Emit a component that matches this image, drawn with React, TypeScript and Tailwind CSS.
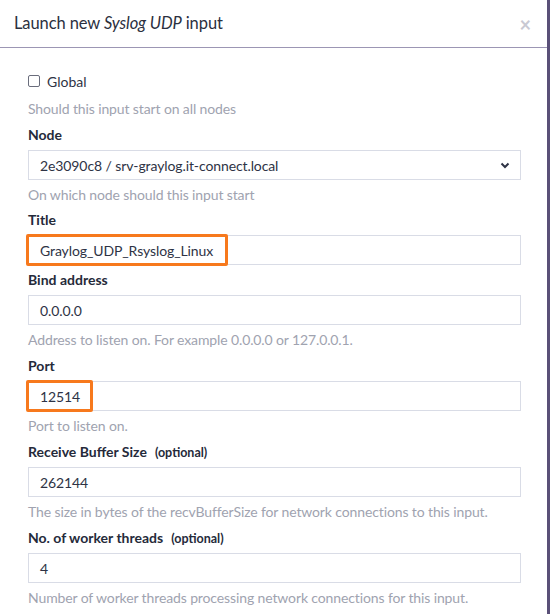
const font = { fontFamily: 'Lato, "Open Sans", sans-serif' }

type Field = {
  label: string
  value: string
  help?: string
  optional?: boolean
  highlight?: number
  select?: boolean
  gap: string
}

const fields: Field[] = [
  { label: 'Node', value: '2e3090c8 / srv-graylog.it-connect.local', help: 'On which node should this input start', select: true, gap: 'mt-[7px]' },
  { label: 'Title', value: 'Graylog_UDP_Rsyslog_Linux', highlight: 202, gap: 'mt-[6px]' },
  { label: 'Bind address', value: '0.0.0.0', help: 'Address to listen on. For example 0.0.0.0 or 127.0.0.1.', gap: 'mt-[5px]' },
  { label: 'Port', value: '12514', help: 'Port to listen on.', highlight: 67, gap: 'mt-[7px]' },
  { label: 'Receive Buffer Size', value: '262144', optional: true, help: 'The size in bytes of the recvBufferSize for network connections to this input.', gap: 'mt-[7px]' },
  { label: 'No. of worker threads', value: '4', optional: true, help: 'Number of worker threads processing network connections for this input.', gap: 'mt-[7px]' },
]

function FormField({ f }: { f: Field }) {
  return (
    <div className={f.gap}>
      <div className="h-5 leading-5 flex items-baseline text-[14px] font-bold text-[#252a3a]">
        {f.label}
        {f.optional && <span className="ml-2 text-[12.5px] font-bold text-[#252a3a]">(optional)</span>}
      </div>
      <div className="relative mt-[5px] h-[30px] border border-[#d9dce6] bg-white flex items-center pl-[11px] pr-3 text-[14px] tracking-[-0.1px] text-[#2e3345]">
        <span className="flex-1">{f.value}</span>
        {f.select && (
          <svg width="10" height="7" viewBox="0 0 10 7" className="mr-[-2px]">
            <path d="M1.5 1.5 L5 5 L8.5 1.5" fill="none" stroke="#2e3345" strokeWidth="2" />
          </svg>
        )}
        {f.highlight && (
          <div
            className="absolute left-[-3px] top-[-2px] h-[32px] border-[3px] border-[#f7791d] rounded-[2px]"
            style={{ width: f.highlight }}
          />
        )}
      </div>
      {f.help && (
        <div className="mt-[4px] h-5 flex items-center text-[14px] tracking-[-0.12px] text-[#a0a3b0]">{f.help}</div>
      )}
    </div>
  )
}

export default function App() {
  return (
    <div className="w-[550px] h-[614px] overflow-hidden bg-white flex" style={font}>
      <div className="flex-1 flex flex-col">
        {/* Header */}
        <div className="h-[48px] shrink-0 flex items-center justify-between pl-[14px] pr-[16px] border-b border-[#9c96b4]">
          <h4 className="text-[16.5px] tracking-[-0.1px] text-[#2b3040]">
            Launch new <i>Syslog UDP</i> input
          </h4>
          <span className="text-[20px] leading-none text-[#c9c9d3] font-bold">×</span>
        </div>

        {/* Body */}
        <div className="pl-[28px] pr-[26px] pt-[23px]">
          <div className="h-5 flex items-center gap-[7px] text-[14px] text-[#2e3345]">
            <span className="w-[12px] h-[12px] border border-[#6a6d7c] rounded-[2px]" />
            Global
          </div>
          <div className="mt-[7px] h-5 flex items-center text-[14px] tracking-[-0.12px] text-[#a0a3b0]">
            Should this input start on all nodes
          </div>
          {fields.map(f => (
            <FormField key={f.label} f={f} />
          ))}
        </div>
      </div>
      <div className="w-[3px] shrink-0 bg-[#5a5078]" />
    </div>
  )
}
